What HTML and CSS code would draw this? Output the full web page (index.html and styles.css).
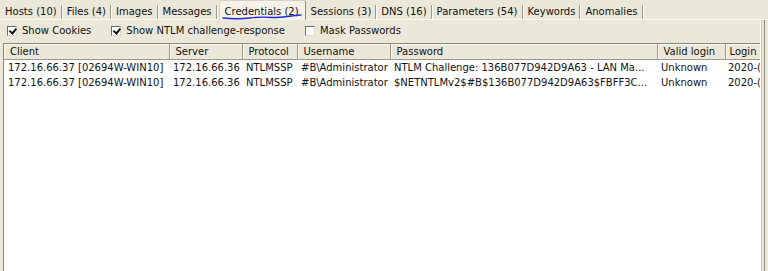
FILE: index.html
```html
<!DOCTYPE html>
<html>
<head>
<meta charset="utf-8">
<link rel="stylesheet" href="styles.css">
</head>
<body>
<div class="window">
  <div class="tabs">
    <div class="tab"><span>Hosts (10)</span></div>
    <div class="tab"><span>Files (4)</span></div>
    <div class="tab"><span>Images</span></div>
    <div class="tab"><span>Messages</span></div>
    <div class="tab active"><span>Credentials (2)</span>
      <svg class="scribble" width="80" height="8" viewBox="0 0 80 8"><path d="M1 5 C10 6 20 6 28 5 C36 4 44 4 50 4.5 C58 5 66 3 79 2" fill="none" stroke="#1f2bd6" stroke-width="1.4" stroke-linecap="round"/></svg>
    </div>
    <div class="tab"><span>Sessions (3)</span></div>
    <div class="tab"><span>DNS (16)</span></div>
    <div class="tab"><span>Parameters (54)</span></div>
    <div class="tab"><span>Keywords</span></div>
    <div class="tab"><span>Anomalies</span></div>
  </div>
  <div class="body">
    <div class="content">
      <div class="options">
        <label class="opt"><span class="cb checked"></span>Show Cookies</label>
        <label class="opt"><span class="cb checked"></span>Show NTLM challenge-response</label>
        <label class="opt"><span class="cb"></span>Mask Passwords</label>
      </div>
      <div class="grid">
        <table>
          <colgroup>
            <col class="c1"><col class="c2"><col class="c3"><col class="c4"><col class="c5"><col class="c6"><col class="c7">
          </colgroup>
          <thead>
            <tr><th>Client</th><th>Server</th><th>Protocol</th><th>Username</th><th>Password</th><th>Valid login</th><th>Login</th></tr>
          </thead>
          <tbody>
            <tr><td>172.16.66.37 [02694W-WIN10]</td><td>172.16.66.36</td><td>NTLMSSP</td><td>#B\Administrator</td><td>NTLM Challenge: 136B077D942D9A63 - LAN Ma...</td><td>Unknown</td><td>2020-(</td></tr>
            <tr><td>172.16.66.37 [02694W-WIN10]</td><td>172.16.66.36</td><td>NTLMSSP</td><td>#B\Administrator</td><td>$NETNTLMv2$#B$136B077D942D9A63$FBFF3C...</td><td>Unknown</td><td>2020-(</td></tr>
          </tbody>
        </table>
      </div>
    </div>
    <div class="edge"></div>
  </div>
</div>
</body>
</html>
```
FILE: styles.css
```css
html, body {
  margin: 0;
  padding: 0;
}
body {
  width: 768px;
  height: 271px;
  overflow: hidden;
  background: #ebe8d9;
  font-family: "DejaVu Sans", "Liberation Sans", sans-serif;
  font-size: 10px;
  color: #111;
}
.window {
  display: flex;
  flex-direction: column;
  height: 271px;
}
.tabs {
  display: flex;
  height: 20px;
  padding-left: 1px;
  border-bottom: 1px solid #fbfaf5;
  box-sizing: border-box;
}
.tab {
  padding-top: 5px;
  position: relative;
}
.tab span {
  display: block;
  padding: 0 4px 0 4px;
  line-height: 14px;
  border-right: 1px solid #9c998c;
  box-shadow: 1px 0 0 #fbfaf5;
  margin-right: 1px;
}
.tab.active {
  background: #f4f2e9;
  border: 1px solid #d5d2c3;
  border-right: 1px solid #8c897d;
  border-bottom: none;
  border-radius: 2px 2px 0 0;
  padding-top: 4px;
  height: 20px;
  box-sizing: border-box;
  padding-left: 1px;
  padding-right: 2px;
  margin-left: 1px;
  margin-right: 1px;
}
.tab.active span {
  border-right: none;
  box-shadow: none;
  margin-right: 0;
}
.scribble {
  position: absolute;
  left: 2px;
  top: 12px;
}
.body {
  flex: 1;
  display: flex;
  min-height: 0;
}
.content {
  width: 760px;
  display: flex;
  flex-direction: column;
  border-right: 1px solid #fbfaf5;
}
.edge {
  width: 2px;
  border-right: 1px solid #8a877b;
  border-left: 1px solid #c9c6b8;
}
.options {
  display: flex;
  height: 21px;
  align-items: center;
  padding-left: 7px;
  gap: 20px;
}
.opt {
  display: flex;
  align-items: center;
  gap: 5px;
}
.cb {
  width: 10px;
  height: 10px;
  background: #fff;
  border: 1px solid #6f6d66;
  border-right-color: #dcdad0;
  border-bottom-color: #dcdad0;
  box-sizing: border-box;
  position: relative;
}
.cb.checked::after {
  content: "";
  position: absolute;
  left: 1px;
  top: 0px;
  width: 3px;
  height: 5px;
  border-right: 2px solid #111;
  border-bottom: 2px solid #111;
  transform: rotate(40deg) translate(1px, -1px);
}
.grid {
  flex: 1;
  margin-left: 3px;
  margin-top: 2px;
  background: #fff;
  border-left: 1px solid #8a877b;
  border-top: 1px solid #8a877b;
  overflow: hidden;
}
table {
  border-collapse: collapse;
  table-layout: fixed;
  width: 822px;
}
col.c1 { width: 165px; }
col.c2 { width: 73px; }
col.c3 { width: 55px; }
col.c4 { width: 93px; }
col.c5 { width: 267px; }
col.c6 { width: 68px; }
col.c7 { width: 101px; }
th {
  background: #ebe8d9;
  font-weight: normal;
  text-align: left;
  height: 15px;
  padding: 0 0 0 6px;
  border-right: 1px solid #9c998c;
  border-bottom: 1px solid #9c998c;
  box-shadow: inset 1px 1px 0 #fbfaf5;
  white-space: nowrap;
  overflow: hidden;
  line-height: 15px;
}
th:last-child {
  padding-left: 4px;
}
td {
  padding: 0 0 0 4px;
  height: 15px;
  line-height: 15px;
  white-space: nowrap;
  overflow: hidden;
}
td:last-child {
  padding-left: 3px;
}
```
